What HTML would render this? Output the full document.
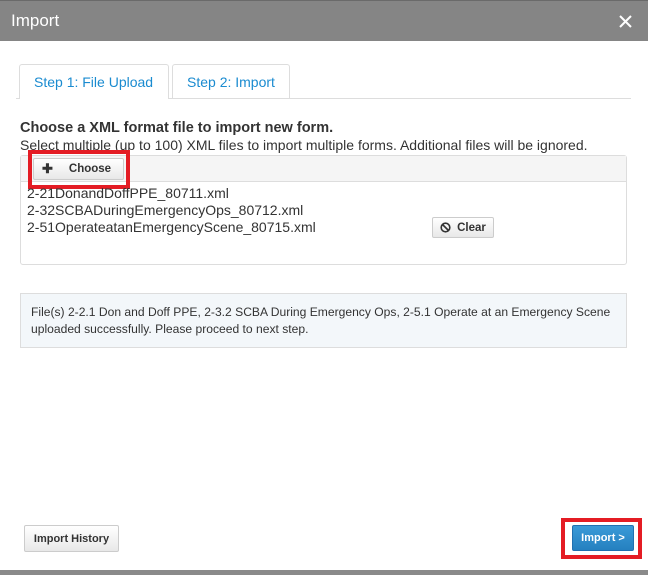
<!DOCTYPE html>
<html><head><style>
*{box-sizing:border-box;margin:0;padding:0}
body{width:648px;height:575px;background:#fff;font-family:"Liberation Sans",Arial,sans-serif;position:relative;overflow:hidden;color:#333}
.a{position:absolute}
.hdr{left:0;top:0;width:648px;height:41px;background:#858585;border-top:1px solid #6a6a6a}
.btn{position:absolute;border:1px solid #ccc;background:linear-gradient(#fff,#e8e8e8);font-weight:bold;font-size:11px;color:#333;display:flex;align-items:center;justify-content:center;border-radius:2px}
.red{position:absolute;border:4px solid #e41c24}
</style></head><body>
<div class="a hdr"></div>
<div class="a" style="left:11px;top:11px;color:#fff;font-size:17px">Import</div>
<svg class="a" style="left:619px;top:15px" width="13" height="13" viewBox="0 0 13 13"><path d="M1 1L12 12M12 1L1 12" stroke="#fff" stroke-width="2"/></svg>

<div class="a" style="left:16px;top:98px;width:615px;height:1px;background:#ddd"></div>
<div class="a" style="left:19px;top:64px;width:150px;height:35px;border:1px solid #ddd;border-bottom:none;background:#fff;border-radius:3px 3px 0 0;color:#1a8bd0;font-size:14px;padding:9px 0 0 14px">Step 1: File Upload</div>
<div class="a" style="left:172px;top:64px;width:118px;height:34px;border:1px solid #ddd;border-bottom:none;border-radius:3px 3px 0 0;color:#1a8bd0;font-size:14px;padding:9px 0 0 14px">Step 2: Import</div>

<div class="a" style="left:20px;top:120px;font-size:14.5px;font-weight:bold">Choose a XML format file to import new form.</div>
<div class="a" style="left:20px;top:137px;font-size:14px">Select multiple (up to 100) XML files to import multiple forms. Additional files will be ignored.</div>

<div class="a" style="left:20px;top:155px;width:607px;height:110px;border:1px solid #ddd;border-radius:3px"></div>
<div class="a" style="left:21px;top:156px;width:605px;height:26px;background:#f5f5f5;border-bottom:1px solid #ddd"></div>
<div class="btn" style="left:33px;top:158px;width:91px;height:22px;justify-content:flex-start;padding-left:8px;font-size:11.5px"><span style="font-size:13px;margin-right:16px">✚</span>Choose</div>
<div class="red" style="left:28px;top:150px;width:102px;height:39px"></div>

<div class="a" style="left:27px;top:185px;font-size:14px;line-height:17px">2-21DonandDoffPPE_80711.xml<br>2-32SCBADuringEmergencyOps_80712.xml<br>2-51OperateatanEmergencyScene_80715.xml</div>
<div class="btn" style="left:432px;top:217px;width:62px;height:21px;font-size:11.5px"><svg width="11" height="11" viewBox="0 0 11 11" style="margin-right:6px"><circle cx="5.5" cy="5.5" r="4.3" fill="none" stroke="#333" stroke-width="1.6"/><path d="M2.5 2.5L8.5 8.5" stroke="#333" stroke-width="1.6"/></svg>Clear</div>

<div class="a" style="left:20px;top:293px;width:607px;height:55px;background:#f3f7fa;border:1px solid #ddd;font-size:12.1px;line-height:17px;padding:10px 10px 0 10px">File(s) 2-2.1 Don and Doff PPE, 2-3.2 SCBA During Emergency Ops, 2-5.1 Operate at an Emergency Scene uploaded successfully. Please proceed to next step.</div>

<div class="btn" style="left:24px;top:525px;width:95px;height:27px">Import History</div>
<div class="a" style="left:572px;top:525px;width:62px;height:26px;background:linear-gradient(#3a9ad8,#2580c0);border:1px solid #2070b0;border-radius:2px;color:#fff;font-size:11px;font-weight:bold;display:flex;align-items:center;justify-content:center">Import &gt;</div>
<div class="red" style="left:561px;top:518px;width:81px;height:41px"></div>

<div class="a" style="left:0;top:570px;width:648px;height:5px;background:#8a8a8a"></div>
</body></html>
